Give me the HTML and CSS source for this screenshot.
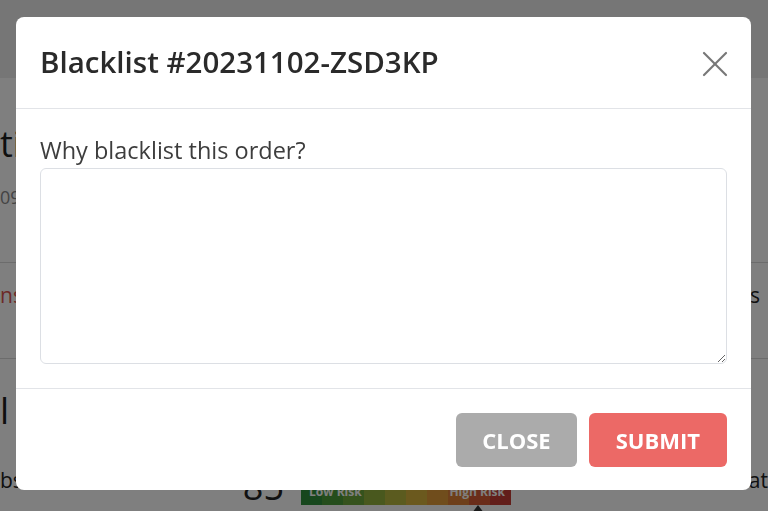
FILE: index.html
```html
<!DOCTYPE html>
<html lang="en">
<head>
    <meta charset="UTF-8">
    <meta name="viewport" content="width=device-width, initial-scale=1.0">
    <title>Blacklist Order</title>
    <link rel="stylesheet" href="styles.css">
</head>
<body>
    <!-- Page behind the modal -->
    <div class="topbar"></div>

    <div class="page-head">
        <h1 class="page-title">ti</h1>
        <div class="page-sub">09</div>
    </div>

    <div class="tabs-row">
        <span class="tab-active">ns</span>
        <span class="tab">s</span>
    </div>

    <div class="section">
        <h2 class="section-title">l</h2>
        <div class="score-row">
            <span class="score-label">bs</span>
            <div class="score">
                <span class="score-value">85</span>
                <div class="gauge">
                    <div class="gauge-bar">
                        <span class="seg s1"></span>
                        <span class="seg s2"></span>
                        <span class="seg s3"></span>
                        <span class="seg s4"></span>
                        <span class="seg s5"></span>
                        <span class="seg s6"></span>
                        <span class="seg s7"></span>
                        <span class="seg s8"></span>
                        <span class="seg s9"></span>
                        <span class="seg s10"></span>
                        <span class="gauge-text low">Low Risk</span>
                        <span class="gauge-text high">High Risk</span>
                    </div>
                    <div class="gauge-marker"></div>
                </div>
            </div>
            <span class="score-label">at</span>
        </div>
    </div>

    <!-- Modal -->
    <div class="modal-backdrop">
        <div class="modal">
            <div class="modal-header">
                <h3 class="modal-title">Blacklist #20231102-ZSD3KP</h3>
                <button class="modal-close" aria-label="Close">
                    <svg viewBox="0 0 26 26" fill="none" stroke="#777" stroke-width="2.2" stroke-linecap="round">
                        <line x1="2" y1="2" x2="24" y2="24"></line>
                        <line x1="24" y1="2" x2="2" y2="24"></line>
                    </svg>
                </button>
            </div>
            <div class="modal-body">
                <label class="field-label" for="reason">Why blacklist this order?</label>
                <textarea class="field-input" id="reason"></textarea>
            </div>
            <div class="modal-footer">
                <button class="btn btn-close">Close</button>
                <button class="btn btn-submit">Submit</button>
            </div>
        </div>
    </div>
</body>
</html>
```

FILE: styles.css
```css
* {
    margin: 0;
    padding: 0;
    box-sizing: border-box;
}

body {
    font-family: 'Open Sans', 'Noto Sans', sans-serif;
    background: #ffffff;
    color: #222;
    overflow: hidden;
    height: 511px;
}

/* Background page */
.topbar {
    height: 78px;
    background: #ededed;
}

.page-head {
    padding: 42px 0 53px;
    border-bottom: 1px solid #d8d8d8;
}

.page-title {
    font-size: 36px;
    line-height: 48px;
    font-weight: 400;
    color: #1e1e1e;
}

.page-sub {
    margin-top: 17px;
    font-size: 18px;
    line-height: 24px;
    color: #888;
}

.tabs-row {
    display: flex;
    justify-content: space-between;
    padding: 17px 0 48px;
    font-size: 21px;
    line-height: 30px;
    border-bottom: 1px solid #d8d8d8;
}

.tab-active {
    color: #d9534f;
}

.tab {
    color: #222;
    margin-right: 8px;
}

.section {
    padding-top: 30px;
}

.section-title {
    font-size: 36px;
    line-height: 44px;
    font-weight: 400;
    color: #1e1e1e;
}

.score-row {
    display: flex;
    justify-content: space-between;
    align-items: flex-start;
    margin-top: 32px;
    font-size: 21px;
    line-height: 30px;
}

.score {
    display: flex;
    align-items: flex-start;
    gap: 17px;
    margin-left: 220px;
    margin-right: auto;
}

.score-value {
    font-size: 36px;
    line-height: 44px;
    color: #222;
}

.gauge {
    margin-top: 18px;
}

.gauge-bar {
    position: relative;
    display: flex;
    width: 210px;
    height: 22px;
}

.seg {
    flex: 1;
}

.s1 { background: #2e8f3a; }
.s2 { background: #4a9a38; }
.s3 { background: #6aa53a; }
.s4 { background: #92b03c; }
.s5 { background: #b6b63e; }
.s6 { background: #d6b23c; }
.s7 { background: #e09a38; }
.s8 { background: #dd7e34; }
.s9 { background: #d45a34; }
.s10 { background: #c43c34; }

.gauge-text {
    position: absolute;
    top: 1px;
    font-size: 12px;
    line-height: 16px;
    font-weight: 700;
    color: #fff;
}

.gauge-text.low {
    left: 8px;
}

.gauge-text.high {
    right: 6px;
}

.gauge-marker {
    width: 0;
    height: 0;
    margin-left: 171px;
    border-left: 6px solid transparent;
    border-right: 6px solid transparent;
    border-bottom: 8px solid #333;
}

/* Modal */
.modal-backdrop {
    position: fixed;
    inset: 0;
    background: rgba(0, 0, 0, 0.5);
    padding: 17px 17px 0 16px;
}

.modal {
    background: #fff;
    border-radius: 8px;
    overflow: hidden;
}

.modal-header {
    display: flex;
    justify-content: space-between;
    align-items: center;
    height: 92px;
    padding: 0 23px 0 24px;
    border-bottom: 1px solid #e2e4e8;
}

.modal-title {
    font-size: 29.5px;
    font-weight: 600;
    color: #2a2a2a;
    padding-bottom: 2px;
}

.modal-close {
    width: 26px;
    height: 26px;
    background: transparent;
    border: none;
    cursor: pointer;
    margin-top: 2px;
}

.modal-close svg {
    width: 100%;
    height: 100%;
    display: block;
}

.modal-body {
    padding: 24px 24px 24px;
    border-bottom: 1px solid #e2e4e8;
}

.field-label {
    display: block;
    font-size: 23.5px;
    line-height: 34px;
    color: #3d3d3d;
    margin-bottom: 1px;
}

.field-input {
    display: block;
    width: 100%;
    height: 196px;
    border: 1px solid #dcdfe4;
    border-radius: 6px;
    font-family: 'Open Sans', sans-serif;
    font-size: 18px;
    padding: 8px 12px;
    resize: vertical;
    outline: none;
}

.modal-footer {
    display: flex;
    justify-content: flex-end;
    gap: 12px;
    padding: 24px 24px 23px;
}

.btn {
    height: 54px;
    padding: 0 26px;
    border: none;
    border-radius: 6px;
    font-family: 'Open Sans', sans-serif;
    font-size: 22px;
    font-weight: 700;
    color: #fff;
    text-transform: uppercase;
    cursor: pointer;
}

.btn-close {
    background: #ababab;
}

.btn-submit {
    background: #ec6966;
    padding: 0 27px;
}
```
